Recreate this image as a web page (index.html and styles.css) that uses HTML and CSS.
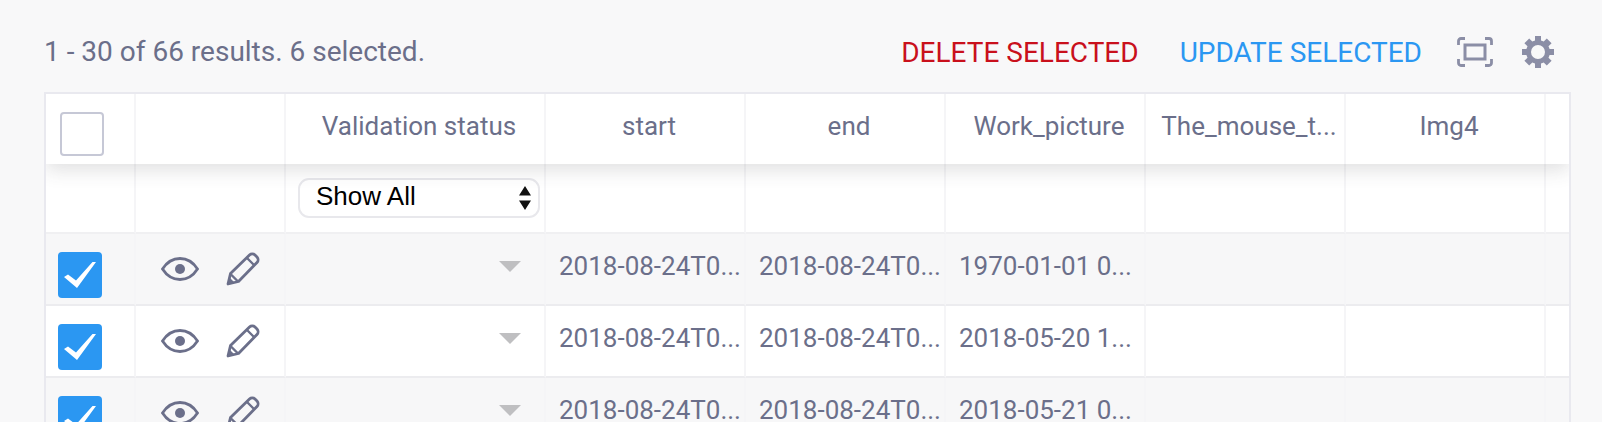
FILE: index.html
```html
<!DOCTYPE html>
<html lang="en">
<head>
<meta charset="utf-8">
<title>Results</title>
<link rel="stylesheet" href="styles.css">
</head>
<body>
<svg class="defs" width="0" height="0" aria-hidden="true">
  <symbol id="eye" viewBox="0 0 38 24"><path d="M1.5 12C6 5 12 1.5 19 1.5S32 5 36.500 12C32 19 26 22.500 19 22.500S6 19 1.500 12Z" fill="none" stroke="currentColor" stroke-width="2.800"/><circle cx="19" cy="12" r="5" fill="currentColor"/></symbol>
  <symbol id="pencil" viewBox="0 0 34 34"><path d="M2 32l2.500-10.500L23.500 3a4 4 0 0 1 5.500 0l2 2a4 4 0 0 1 0 5.500L12.500 29.500Z" fill="none" stroke="currentColor" stroke-width="2.800" stroke-linejoin="round"/><path d="M21 6l7 7M4.500 22l7.500 7.500" fill="none" stroke="currentColor" stroke-width="2.400"/><path d="M2 32l1.500-6.500 5 5Z" fill="currentColor"/></symbol>
  <symbol id="check" viewBox="0 0 34 28"><path d="M1 16l4-2.500 8 6L29.500 1H33L14 27Z" fill="#fff"/></symbol>
</svg>
<main class="page">
  <header class="toolbar">
    <p class="count">1 - 30 of 66 results. 6 selected.</p>
    <div class="actions">
      <a class="action danger">DELETE SELECTED</a>
      <a class="action primary">UPDATE SELECTED</a>
      <svg class="fit-icon" viewBox="0 0 36 30" aria-label="Fit"><path d="M1.500 8V4a2.500 2.500 0 0 1 2.500-2.500h4M28 1.500h4a2.500 2.500 0 0 1 2.500 2.500v4M34.500 22v4a2.500 2.500 0 0 1-2.500 2.500h-4M8 28.500H4A2.500 2.500 0 0 1 1.500 26v-4" fill="none" stroke="currentColor" stroke-width="2.800"/><rect x="8" y="8" width="20" height="14" fill="none" stroke="currentColor" stroke-width="3"/></svg>
      <svg class="gear-icon" viewBox="0 0 32 32" aria-label="Settings"><path fill-rule="evenodd" fill="currentColor" d="M13 0h6v4.400l2.700 1.100 3.100-3.100 4.800 4.800-3.100 3.100 1.100 2.700H32v6h-4.400l-1.100 2.700 3.100 3.100-4.800 4.800-3.100-3.100-2.700 1.100V32h-6v-4.400l-2.700-1.100-3.100 3.100-4.800-4.800 3.100-3.100L4.400 19H0v-6h4.400l1.100-2.700-3.100-3.100 4.800-4.800 3.100 3.100L13 4.400ZM16 9a7 7 0 1 0 0 14 7 7 0 0 0 0-14Z"/></svg>
    </div>
  </header>
  <section class="table-box">
    <table class="grid">
      <colgroup>
        <col class="c-check"><col class="c-tools"><col class="c-status"><col class="c-data"><col class="c-data"><col class="c-data"><col class="c-data"><col class="c-data"><col class="c-rest">
      </colgroup>
      <thead>
        <tr class="head-row">
          <th class="check-cell"><span class="box"></span></th>
          <th></th>
          <th>Validation status</th>
          <th>start</th>
          <th>end</th>
          <th>Work_picture</th>
          <th>The_mouse_t...</th>
          <th>Img4</th>
          <th></th>
        </tr>
      </thead>
      <tbody>
        <tr class="filter-row">
          <td></td><td></td>
          <td class="filter-cell">
            <span class="select-wrap">
              <select class="select"><option>Show All</option></select>
              <svg class="select-arrows" viewBox="0 0 12 24"><path d="M6 0l6 9.500H0ZM6 24L0 14.500h12Z" fill="currentColor"/></svg>
            </span>
          </td>
          <td></td><td></td><td></td><td></td><td></td><td></td>
        </tr>
        <tr class="row odd">
          <td class="check-cell"><span class="box on"><svg class="check" viewBox="0 0 34 28"><use href="#check"/></svg></span></td>
          <td class="tools"><svg class="eye"><use href="#eye"/></svg><svg class="pencil"><use href="#pencil"/></svg></td>
          <td class="status"><span class="caret"></span></td>
          <td>2018-08-24T0...</td><td>2018-08-24T0...</td><td>1970-01-01 0...</td><td></td><td></td><td></td>
        </tr>
        <tr class="row">
          <td class="check-cell"><span class="box on"><svg class="check" viewBox="0 0 34 28"><use href="#check"/></svg></span></td>
          <td class="tools"><svg class="eye"><use href="#eye"/></svg><svg class="pencil"><use href="#pencil"/></svg></td>
          <td class="status"><span class="caret"></span></td>
          <td>2018-08-24T0...</td><td>2018-08-24T0...</td><td>2018-05-20 1...</td><td></td><td></td><td></td>
        </tr>
        <tr class="row odd">
          <td class="check-cell"><span class="box on"><svg class="check" viewBox="0 0 34 28"><use href="#check"/></svg></span></td>
          <td class="tools"><svg class="eye"><use href="#eye"/></svg><svg class="pencil"><use href="#pencil"/></svg></td>
          <td class="status"><span class="caret"></span></td>
          <td>2018-08-24T0...</td><td>2018-08-24T0...</td><td>2018-05-21 0...</td><td></td><td></td><td></td>
        </tr>
      </tbody>
    </table>
  </section>
</main>
</body>
</html>
```
FILE: styles.css
```css
* { box-sizing: border-box; }
html, body { margin: 0; height: 422px; overflow: hidden; background: #f8f8f9; }
.defs { position: absolute; }
.page { padding: 0 31px 0 44px; font-family: Roboto, "Liberation Sans", sans-serif; color: #6b6f8a; }
.toolbar { height: 92px; display: flex; align-items: flex-start; justify-content: space-between; padding-top: 34px; }
.count { margin: 0; font-size: 28px; line-height: 36px; }
.actions { display: flex; align-items: center; height: 36px; margin-right: 17px; }
.action { font-size: 28px; line-height: 36px; position: relative; top: 1px; }
.danger { color: #c9101c; }
.primary { color: #2b97f2; margin-left: 41px; }
.fit-icon { width: 36px; height: 30px; margin-left: 35px; color: #8b8ea6; }
.gear-icon { width: 32px; height: 32px; margin-left: 29px; color: #8b8ea6; }
.table-box { border: 2px solid #e9e9ef; border-bottom: 0; background: #fff; overflow: hidden; }
.grid { width: 100%; table-layout: fixed; border-collapse: separate; border-spacing: 0; }
.c-check { width: 90px; }
.c-tools { width: 150px; }
.c-status { width: 260px; }
.c-data { width: 200px; }
.grid th, .grid td { padding: 0; border-right: 2px solid #f5f5f7; font-size: 26px; text-align: center; vertical-align: middle; overflow: hidden; white-space: nowrap; }
.grid th:last-child, .grid td:last-child { border-right: 0; }
.grid th { height: 70px; padding: 0 0 6px 8px; font-weight: 400; color: #6b6f8a; background: #fff; }
.grid th.check-cell { padding: 9px 0 0; }
.head-row { position: relative; z-index: 2; box-shadow: 0 6px 18px rgba(60, 60, 70, .16); }
.filter-row td { height: 70px; border-bottom: 2px solid #f0f0f2; background: #fff; }
.grid .filter-cell { padding: 0 4px 0 12px; }
.select-wrap { position: relative; display: block; }
.select { appearance: none; -webkit-appearance: none; display: block; width: 100%; height: 40px; padding: 0 16px 4px; border: 2px solid #e8e8ec; border-radius: 11px; background: #fff; color: #000; font: 26px "Liberation Sans", Arial, sans-serif; }
.select-arrows { position: absolute; right: 9px; top: 8px; width: 12px; height: 24px; color: #111; pointer-events: none; }
.grid .row td { height: 72px; padding: 0 0 6px 13px; border-bottom: 2px solid #ececef; background: #fff; color: #6b6f8a; text-align: left; }
.grid .row.odd td { background: #f7f7f8; }
.grid .row td.check-cell { padding: 12px 0 0; }
.box { display: block; width: 44px; height: 44px; margin-left: 14px; border: 2px solid #c6c8d6; border-radius: 4px; background: #fff; }
.box.on { width: 44px; height: 46px; margin-left: 12px; border: 0; background: #2b97f2; display: flex; align-items: center; justify-content: center; }
.check { width: 34px; height: 28px; }
.grid .row td.tools { padding: 0 0 0 25px; }
.tools svg { vertical-align: middle; color: #6b6f8a; }
.eye { width: 38px; height: 24px; margin-right: 27px; }
.pencil { width: 34px; height: 34px; }
.grid .row td.status { text-align: right; padding: 0 23px 0 0; }
.caret { display: inline-block; width: 0; height: 0; border-left: 11px solid transparent; border-right: 11px solid transparent; border-top: 11px solid #bfbfc1; position: relative; top: -6px; }
```
